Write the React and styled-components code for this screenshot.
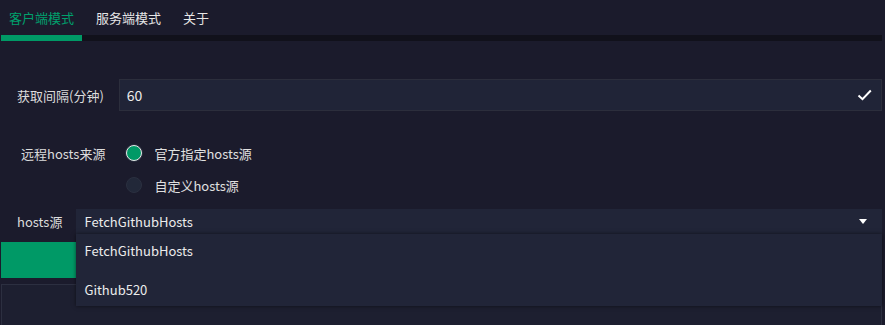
import React from "react";
import styled, { createGlobalStyle } from "styled-components";

const Global = createGlobalStyle`
  html, body { margin: 0; padding: 0; background: #1b1b2c; }
  body {
    font-family: "Noto Sans CJK SC", "Noto Sans", "Liberation Sans", sans-serif;
    font-size: 13px;
    color: #dcdcdc;
    overflow: hidden;
  }
`;

const Page = styled.div`
  width: 885px;
  height: 325px;
  box-sizing: border-box;
  padding: 0 3px 0 1px;
  overflow: hidden;
`;

const TabBar = styled.div`
  display: flex;
  gap: 6px;
  height: 41px;
  box-shadow: inset 0 -6px 0 #11111b;
`;

const Tab = styled.div`
  box-sizing: border-box;
  height: 41px;
  padding: 0 8px;
  display: flex;
  align-items: center;
  color: ${(p) => (p.$active ? "#00a06c" : "#e6e6e6")};
  border-bottom: 6px solid ${(p) => (p.$active ? "#009966" : "transparent")};
  line-height: 1;
`;

const Form = styled.div`
  padding-top: 38px;
  display: flex;
  flex-direction: column;
`;

const Row = styled.div`
  display: flex;
  align-items: ${(p) => p.$align || "center"};
  height: ${(p) => p.$h || 32}px;
  margin-top: ${(p) => p.$mt || 0}px;
  position: relative;
`;

const Label = styled.div`
  display: flex;
  align-items: center;
  height: ${(p) => p.$h || "auto"};
  padding-left: ${(p) => p.$pl || 16}px;
  margin-right: ${(p) => p.$mr || 15}px;
  white-space: nowrap;
  color: #dcdcdc;
`;

const Input = styled.div`
  flex: 1;
  height: 32px;
  box-sizing: border-box;
  background: #202437;
  border: 1px solid #2c2e3c;
  display: flex;
  align-items: center;
  padding: 0 9px 0 7px;
  color: #ececec;
  font-size: 14px;
`;

const InputValue = styled.span`
  flex: 1;
`;

const RadioGroup = styled.div`
  display: flex;
  flex-direction: column;
`;

const RadioItem = styled.div`
  display: flex;
  align-items: center;
  height: 32px;
  gap: 12px;
  color: #e0e0e0;
`;

const RadioCircle = styled.span`
  width: 16px;
  height: 16px;
  box-sizing: border-box;
  border-radius: 50%;
  background: ${(p) => (p.$checked ? "#009966" : "#222839")};
  border: ${(p) => (p.$checked ? "1.5px solid #e8e8e8" : "1px solid #2b3040")};
  box-shadow: ${(p) => (p.$checked ? "0 0 0 1px #2b3040" : "none")};
`;

const SelectWrap = styled.div`
  flex: 1;
  position: relative;
  height: 25px;
`;

const SelectBox = styled.div`
  height: 25px;
  background: #212538;
  display: flex;
  align-items: center;
  padding: 0 15px 0 8px;
  color: #ececec;
`;

const SelectText = styled.span`
  flex: 1;
`;

const Caret = styled.span`
  width: 0;
  height: 0;
  border-left: 4px solid transparent;
  border-right: 4px solid transparent;
  border-top: 5px solid #ffffff;
`;

const Menu = styled.div`
  position: absolute;
  top: 25px;
  left: 0;
  right: 0;
  height: 72px;
  box-sizing: border-box;
  background: #212538;
  box-shadow: 0 0 4px rgba(0, 0, 0, 0.55);
  z-index: 2;
  display: flex;
  flex-direction: column;
  gap: 7px;
`;

const MenuItem = styled.div`
  height: 32px;
  display: flex;
  align-items: center;
  padding-left: 8px;
  color: #ececec;
`;

const GreenButton = styled.div`
  height: 36px;
  margin-top: 8px;
  background: #009966;
`;

const Panel = styled.div`
  margin-top: 6px;
  height: 60px;
  box-sizing: border-box;
  border: 1px solid #2c2f40;
  background: #1d1f30;
`;

const Check = () => (
  <svg width="15" height="12" viewBox="0 0 15 12">
    <polyline
      points="1.5,6.5 5.5,10.2 13.8,1.5"
      fill="none"
      stroke="#ffffff"
      strokeWidth="2"
    />
  </svg>
);

export default function App() {
  return (
    <Page>
      <Global />
      <TabBar>
        <Tab $active>客户端模式</Tab>
        <Tab>服务端模式</Tab>
        <Tab>关于</Tab>
      </TabBar>
      <Form>
        <Row>
          <Label $pl={16} $mr={15}>获取间隔(分钟)</Label>
          <Input>
            <InputValue>60</InputValue>
            <Check />
          </Input>
        </Row>
        <Row $h={64} $mt={26} $align="flex-start">
          <Label $pl={20} $mr={21} $h="32px">远程hosts来源</Label>
          <RadioGroup>
            <RadioItem>
              <RadioCircle $checked />
              官方指定hosts源
            </RadioItem>
            <RadioItem>
              <RadioCircle />
              自定义hosts源
            </RadioItem>
          </RadioGroup>
        </Row>
        <Row $h={25} $mt={8}>
          <Label $pl={16} $mr={14}>hosts源</Label>
          <SelectWrap>
            <SelectBox>
              <SelectText>FetchGithubHosts</SelectText>
              <Caret />
            </SelectBox>
            <Menu>
              <MenuItem>FetchGithubHosts</MenuItem>
              <MenuItem>Github520</MenuItem>
            </Menu>
          </SelectWrap>
        </Row>
        <GreenButton />
        <Panel />
      </Form>
    </Page>
  );
}
